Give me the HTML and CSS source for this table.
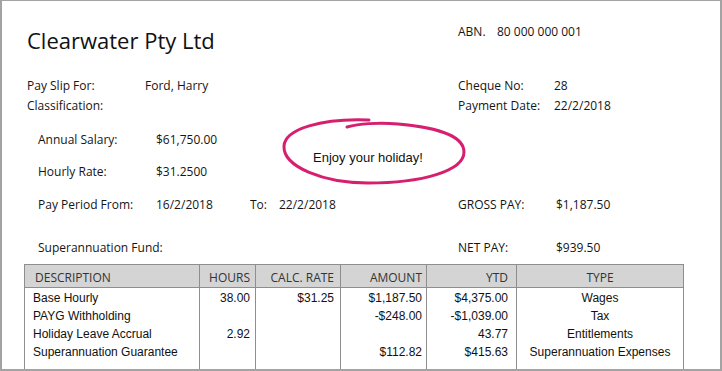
FILE: index.html
```html
<!DOCTYPE html>
<html lang="en">
<head>
<meta charset="utf-8">
<title>Pay Slip</title>
<link rel="stylesheet" href="styles.css">
</head>
<body>
<div class="page">
  <header class="masthead">
    <h1 class="company">Clearwater Pty Ltd</h1>
    <div class="abn"><span class="abn-label">ABN.</span><span>80 000 000 001</span></div>
  </header>

  <section class="meta">
    <div class="meta-left">
      <span>Pay Slip For:</span><span>Ford, Harry</span>
      <span>Classification:</span><span></span>
    </div>
    <div class="meta-right">
      <span>Cheque No:</span><span>28</span>
      <span>Payment Date:</span><span>22/2/2018</span>
    </div>
  </section>

  <section class="details">
    <span class="c1">Annual Salary:</span><span class="c2">$61,750.00</span>
    <span class="c1">Hourly Rate:</span><span class="c2">$31.2500</span>
    <span class="c1">Pay Period From:</span><span class="c2">16/2/2018</span><span class="c3">To:</span><span class="c4">22/2/2018</span><span class="c5">GROSS PAY:</span><span class="c6">$1,187.50</span>
    <span class="c1 wide">Superannuation Fund:</span><span class="c5">NET PAY:</span><span class="c6">$939.50</span>
  </section>

  <table class="lines">
    <colgroup>
      <col class="w-desc"><col class="w-hours"><col class="w-rate"><col class="w-amount"><col class="w-ytd"><col class="w-type">
    </colgroup>
    <thead>
      <tr>
        <th class="desc">DESCRIPTION</th>
        <th class="hours">HOURS</th>
        <th class="rate">CALC. RATE</th>
        <th class="amount">AMOUNT</th>
        <th class="ytd">YTD</th>
        <th class="type">TYPE</th>
      </tr>
    </thead>
    <tbody>
      <tr class="first">
        <td class="desc">Base Hourly</td><td class="hours">38.00</td><td class="rate">$31.25</td><td class="amount">$1,187.50</td><td class="ytd">$4,375.00</td><td class="type">Wages</td>
      </tr>
      <tr>
        <td class="desc">PAYG Withholding</td><td class="hours"></td><td class="rate"></td><td class="amount">-$248.00</td><td class="ytd">-$1,039.00</td><td class="type">Tax</td>
      </tr>
      <tr>
        <td class="desc">Holiday Leave Accrual</td><td class="hours">2.92</td><td class="rate"></td><td class="amount"></td><td class="ytd">43.77</td><td class="type">Entitlements</td>
      </tr>
      <tr>
        <td class="desc">Superannuation Guarantee</td><td class="hours"></td><td class="rate"></td><td class="amount">$112.82</td><td class="ytd">$415.63</td><td class="type">Superannuation Expenses</td>
      </tr>
      <tr class="spacer">
        <td></td><td></td><td></td><td></td><td></td><td></td>
      </tr>
    </tbody>
  </table>

  <div class="note">
    <svg class="note-ring" viewBox="275 112 192 76" width="192" height="76" aria-hidden="true">
      <path d="M367 119 C320 117 283 128 282 145 C281 166 322 182 366 182 C420 182 462 170 462 151 C462 134 432 126 396 123 C376 121 356 123 345 126" fill="none" stroke="#d6206f" stroke-width="3" stroke-linecap="round"/>
    </svg>
    <span class="note-text">Enjoy your holiday!</span>
  </div>
</div>
</body>
</html>
```

FILE: styles.css
```css
* { box-sizing: border-box; }

body {
  margin: 0;
  background: #ffffff;
}

.page {
  position: relative;
  width: 722px;
  height: 371px;
  overflow: hidden;
  background: #ffffff;
  border: solid #a3a3a3;
  border-width: 1px 2px 2px 2px;
  font-family: "Open Sans", "Noto Sans", sans-serif;
  font-size: 12px;
  color: #151515;
}

/* top header */
.masthead {
  display: flex;
  padding: 22px 0 0 25px;
}

.company {
  margin: 2px 0 0;
  width: 431px;
  font-size: 22px;
  font-weight: 400;
  line-height: 30px;
  color: #111111;
}

.abn {
  display: flex;
  line-height: 18px;
}

.abn-label { width: 39px; }

/* pay slip for / cheque */
.meta {
  display: flex;
  margin-top: 21px;
  padding-left: 25px;
  line-height: 20px;
}

.meta-left {
  width: 431px;
  display: grid;
  grid-template-columns: 118px auto;
}

.meta-right {
  display: grid;
  grid-template-columns: 96px auto;
}

/* salary details */
.details {
  display: grid;
  grid-template-columns: 118px 94px 29px 179px 98px auto;
  grid-template-rows: 32px 33px 43px 20px;
  margin-top: 14px;
  padding-left: 36px;
  line-height: 20px;
  align-items: start;
}

.c1 { grid-column: 1; }
.c2 { grid-column: 2; }
.c3 { grid-column: 3; }
.c4 { grid-column: 4; }
.c5 { grid-column: 5; }
.c6 { grid-column: 6; }
.c1.wide { grid-column: 1 / span 4; }

/* line items table */
.lines {
  margin: 6px 0 0 22px;
  border-collapse: collapse;
  table-layout: fixed;
  width: 659px;
}

.w-desc { width: 175px; }
.w-hours { width: 56px; }
.w-rate { width: 85px; }
.w-amount { width: 86px; }
.w-ytd { width: 90px; }
.w-type { width: 167px; }

.lines th {
  height: 23px;
  padding: 2px 0 0;
  background: #d4d4d4;
  border: 1px solid #8e8e8e;
  font-weight: 400;
  font-size: 12px;
  line-height: 19px;
  color: #333333;
  text-align: right;
}

.lines td {
  padding: 0;
  border-left: 1px solid #8e8e8e;
  border-right: 1px solid #8e8e8e;
  font-family: "Liberation Sans", Arial, sans-serif;
  font-size: 12px;
  line-height: 18px;
  color: #111111;
  text-align: right;
  white-space: nowrap;
}

.lines tr.first td { padding-top: 1px; }
.lines tr.spacer td { height: 15px; border-bottom: 1px solid #8e8e8e; }

.lines th.desc { text-align: left; padding-left: 10px; }
.lines td.desc { text-align: left; padding-left: 8px; }
.lines .hours { padding-right: 5px; }
.lines .rate { padding-right: 6px; }
.lines .amount { padding-right: 4px; }
.lines .ytd { padding-right: 8px; }
.lines .type { text-align: center; }
.lines th.type { text-align: center; }

/* annotation */
.note {
  position: absolute;
  left: 275px;
  top: 112px;
  width: 192px;
  height: 76px;
  display: flex;
  justify-content: center;
  padding: 37px 10px 0 0;
}

.note-ring {
  position: absolute;
  left: 0;
  top: 0;
  overflow: visible;
}

.note-text {
  position: relative;
  font-family: "Liberation Sans", Arial, sans-serif;
  font-size: 13px;
  line-height: 16px;
  color: #111111;
}
```
